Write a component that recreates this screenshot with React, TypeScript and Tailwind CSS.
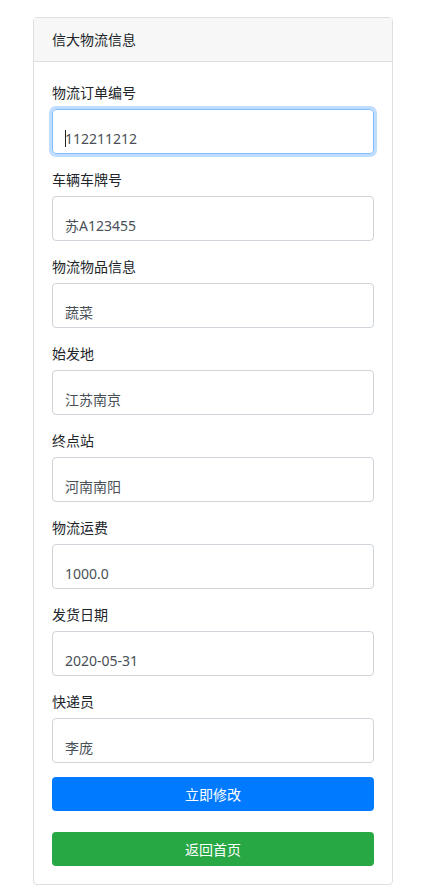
import React from 'react'

const fields = [
  { label: '物流订单编号', value: '112211212', focused: true },
  { label: '车辆车牌号', value: '苏A123455' },
  { label: '物流物品信息', value: '蔬菜' },
  { label: '始发地', value: '江苏南京' },
  { label: '终点站', value: '河南南阳' },
  { label: '物流运费', value: '1000.0' },
  { label: '发货日期', value: '2020-05-31' },
  { label: '快递员', value: '李庞' },
]

const Field: React.FC<{ label: string; value: string; focused?: boolean }> = ({ label, value, focused }) => (
  <div className="flex flex-col">
    <label className="text-[14px] leading-[21px] text-[#212529]">{label}</label>
    <div
      className={
        focused
          ? 'mt-[6px] flex h-[45px] items-end rounded-[4px] border border-[#80bdff] px-3 pb-[4px] text-[14px] leading-[21px] text-[#495057] shadow-[0_0_0_3px_rgba(0,123,255,0.25)]'
          : 'mt-[6px] flex h-[45px] items-end rounded-[4px] border border-[#ced4da] px-3 pb-[4px] text-[14px] leading-[21px] text-[#495057]'
      }
    >
      {focused ? <span className="mb-[2px] mr-[-1px] h-[17px] w-px bg-[#222]" /> : null}
      <span>{value}</span>
    </div>
  </div>
)

export default function App() {
  return (
    <div
      className="min-h-[892px] bg-white pt-[17px]"
      style={{ fontFamily: '"Noto Sans", "Noto Sans CJK SC", sans-serif' }}
    >
      <div className="ml-[33px] w-[360px] rounded-[4px] border border-[#dfdfdf]">
        <div className="flex h-[44px] items-center border-b border-[#dfdfdf] bg-[#f7f7f7] px-[18px] text-[14px] text-[#212529]">
          信大物流信息
        </div>
        <div className="flex flex-col px-[18px] pb-[18px] pt-[20px]">
          <div className="flex flex-col gap-[15px]">
            {fields.map(f => (
              <Field key={f.label} {...f} />
            ))}
          </div>
          <button
            type="button"
            className="mt-[14px] h-[34px] rounded-[4px] bg-[#007bff] text-[14px] text-white"
          >
            立即修改
          </button>
          <button
            type="button"
            className="mt-[21px] h-[34px] rounded-[4px] bg-[#28a745] text-[14px] text-white"
          >
            返回首页
          </button>
        </div>
      </div>
    </div>
  )
}
